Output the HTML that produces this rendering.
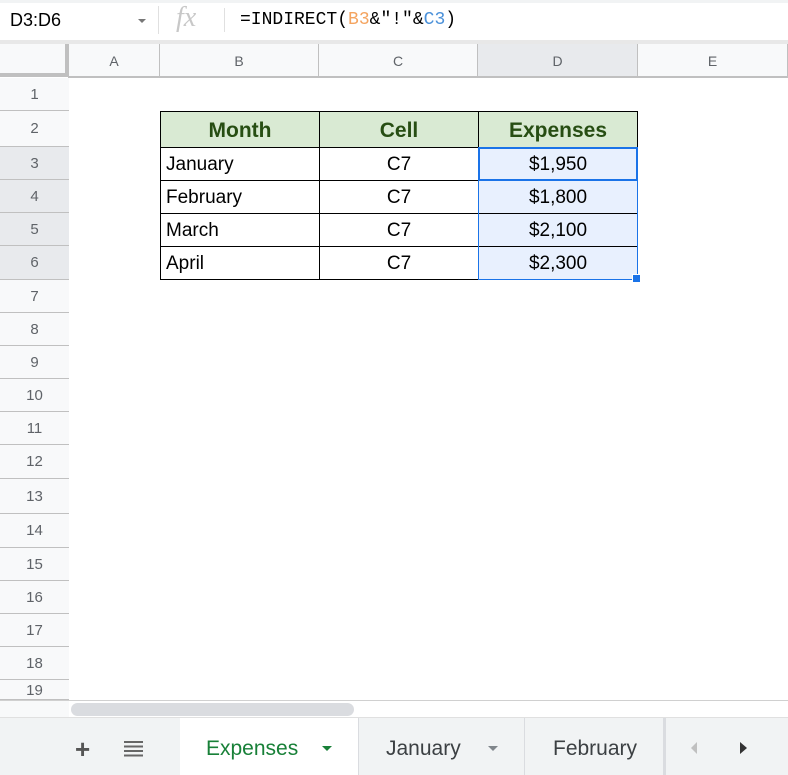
<!DOCTYPE html>
<html><head><style>
*{margin:0;padding:0;box-sizing:border-box}
body{width:788px;height:775px;overflow:hidden;background:#fff;font-family:"Liberation Sans",Arial,sans-serif;position:relative}
.a{position:absolute}
.rh{position:absolute;left:0;width:69px;background:#f8f9fa;border-bottom:1px solid #c0c0c0;color:#5f6368;font-size:15px;display:flex;align-items:center;justify-content:center}
.sel{background:#e8eaed}
.ch{position:absolute;top:44px;height:33px;background:#f8f9fa;border-right:1px solid #c0c0c0;color:#5f6368;font-size:14px;display:flex;align-items:center;justify-content:center}
.c{position:absolute;border:1px solid #000;font-size:19px;color:#000;display:flex;align-items:center;padding-top:2px}
.h{background:#d9ead3;color:#274e13;font-weight:bold;font-size:21px;justify-content:center}
.ctr{justify-content:center}
.d{background:#e8f0fe;justify-content:center}
</style></head><body>
<div class="a" style="left:0;top:0;width:788px;height:3px;background:#f1f3f4"></div>
<div class="a" style="left:10px;top:10px;font-size:18px;color:#000">D3:D6</div>
<div class="a" style="left:138px;top:19px;width:0;height:0;border-left:4px solid transparent;border-right:4px solid transparent;border-top:4px solid #777"></div>
<div class="a" style="left:158px;top:6px;width:1px;height:28px;background:#e0e0e0"></div>
<div class="a" style="left:176px;top:2px;font-size:28px;font-style:italic;color:#c8c8c8;font-family:'Liberation Serif',serif">fx</div>
<div class="a" style="left:224px;top:8px;width:1px;height:24px;background:#e0e0e0"></div>
<div class="a" style="left:240px;top:10px;font-size:18px;font-family:'Liberation Mono',monospace;color:#000">=INDIRECT(<span style="color:#f4a460">B3</span>&amp;"!"&amp;<span style="color:#4a90d9">C3</span>)</div>
<div class="a" style="left:0;top:40px;width:788px;height:4px;background:#e8e8e8"></div>
<div class="a" style="left:0;top:44px;width:69px;height:33px;background:#f8f9fa;border-right:4px solid #c0c0c0;border-bottom:4px solid #c0c0c0"></div>
<div class="ch" style="left:69px;width:91px">A</div>
<div class="ch" style="left:160px;width:159px">B</div>
<div class="ch" style="left:319px;width:159px">C</div>
<div class="ch" style="left:478px;width:160px;background:#e8eaed">D</div>
<div class="ch" style="left:638px;width:150px">E</div>
<div class="a" style="left:69px;top:76px;width:719px;height:2px;background:#c0c0c0"></div>
<div class="a" style="left:68px;top:77px;width:1px;height:640px;background:#c0c0c0"></div>
<div class="rh" style="top:78px;height:33px">1</div>
<div class="rh" style="top:111px;height:36px">2</div>
<div class="rh sel" style="top:147px;height:33px">3</div>
<div class="rh sel" style="top:180px;height:33px">4</div>
<div class="rh sel" style="top:213px;height:33px">5</div>
<div class="rh sel" style="top:246px;height:34px">6</div>
<div class="rh" style="top:280px;height:33px">7</div>
<div class="rh" style="top:313px;height:33px">8</div>
<div class="rh" style="top:346px;height:33px">9</div>
<div class="rh" style="top:379px;height:33px">10</div>
<div class="rh" style="top:412px;height:33px">11</div>
<div class="rh" style="top:445px;height:34px">12</div>
<div class="rh" style="top:479px;height:35px">13</div>
<div class="rh" style="top:514px;height:34px">14</div>
<div class="rh" style="top:548px;height:33px">15</div>
<div class="rh" style="top:581px;height:33px">16</div>
<div class="rh" style="top:614px;height:33px">17</div>
<div class="rh" style="top:647px;height:33px">18</div>
<div class="rh" style="top:680px;height:20px;align-items:flex-end">19</div>
<div class="c h" style="left:160px;top:111px;width:160px;height:37px">Month</div>
<div class="c h" style="left:319px;top:111px;width:160px;height:37px">Cell</div>
<div class="c h" style="left:478px;top:111px;width:160px;height:37px">Expenses</div>
<div class="c" style="left:160px;top:147px;width:160px;height:34px;padding-left:5px">January</div>
<div class="c ctr" style="left:319px;top:147px;width:160px;height:34px">C7</div>
<div class="c d" style="left:478px;top:147px;width:160px;height:34px">$1,950</div>
<div class="c" style="left:160px;top:180px;width:160px;height:34px;padding-left:5px">February</div>
<div class="c ctr" style="left:319px;top:180px;width:160px;height:34px">C7</div>
<div class="c d" style="left:478px;top:180px;width:160px;height:34px">$1,800</div>
<div class="c" style="left:160px;top:213px;width:160px;height:34px;padding-left:5px">March</div>
<div class="c ctr" style="left:319px;top:213px;width:160px;height:34px">C7</div>
<div class="c d" style="left:478px;top:213px;width:160px;height:34px">$2,100</div>
<div class="c" style="left:160px;top:246px;width:160px;height:34px;padding-left:5px">April</div>
<div class="c ctr" style="left:319px;top:246px;width:160px;height:34px">C7</div>
<div class="c d" style="left:478px;top:246px;width:160px;height:34px">$2,300</div>
<div class="a" style="left:478px;top:147px;width:160px;height:133px;border:1px solid #1a73e8"></div>
<div class="a" style="left:478px;top:147px;width:160px;height:34px;border:2px solid #1a73e8"></div>
<div class="a" style="left:632px;top:274px;width:9px;height:9px;background:#1a73e8;border:1px solid #fff"></div>
<div class="a" style="left:0;top:700px;width:788px;height:1px;background:#d0d0d0"></div>
<div class="a" style="left:0;top:701px;width:69px;height:16px;background:#f8f9fa"></div>
<div class="a" style="left:71px;top:703px;width:283px;height:13px;border-radius:7px;background:#dadce0"></div>
<div class="a" style="left:0;top:717px;width:788px;height:58px;background:#f1f3f4;border-top:1px solid #e0e0e0"></div>
<div class="a" style="left:75px;top:734px;font-size:26px;color:#555;font-weight:bold">+</div>
<div class="a" style="left:124px;top:741px;width:19px;height:16px;background:repeating-linear-gradient(#666 0 2px,transparent 2px 4.5px)"></div>
<div class="a" style="left:180px;top:718px;width:178px;height:57px;background:#fff"></div>
<div class="a" style="left:206px;top:737px;font-size:21px;color:#188038">Expenses</div>
<div class="a" style="left:322px;top:746px;border-left:5px solid transparent;border-right:5px solid transparent;border-top:5px solid #188038"></div>
<div class="a" style="left:358px;top:718px;width:1px;height:57px;background:#dadce0"></div>
<div class="a" style="left:386px;top:737px;font-size:21px;color:#3c4043">January</div>
<div class="a" style="left:488px;top:746px;border-left:5px solid transparent;border-right:5px solid transparent;border-top:5px solid #80868b"></div>
<div class="a" style="left:524px;top:718px;width:1px;height:57px;background:#dadce0"></div>
<div class="a" style="left:553px;top:737px;font-size:21px;color:#3c4043">February</div>
<div class="a" style="left:663px;top:718px;width:3px;height:57px;background:#dadce0"></div>
<div class="a" style="left:691px;top:742px;border-top:6px solid transparent;border-bottom:6px solid transparent;border-right:6px solid #c0c0c0"></div>
<div class="a" style="left:740px;top:742px;border-top:6px solid transparent;border-bottom:6px solid transparent;border-left:7px solid #333"></div>
</body></html>
